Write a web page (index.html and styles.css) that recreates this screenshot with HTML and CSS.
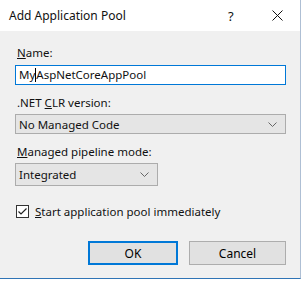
FILE: index.html
```html
<!DOCTYPE html>
<html lang="en">
<head>
    <meta charset="UTF-8">
    <title>Add Application Pool</title>
    <link rel="stylesheet" href="styles.css">
</head>
<body>
    <div class="dialog">
        <div class="titlebar">
            <span class="title">Add Application Pool</span>
            <span class="help">?</span>
            <span class="close">
                <svg width="11" height="11" viewBox="0 0 11 11">
                    <path d="M0.5 0.5 L10.5 10.5 M10.5 0.5 L0.5 10.5" stroke="#111" stroke-width="1" fill="none"/>
                </svg>
            </span>
        </div>

        <div class="content">
            <label class="lbl"><u>N</u>ame:</label>
            <div class="textbox">My<span class="caret"></span>AspNetCoreAppPool</div>

            <label class="lbl lbl-gap">.NET <u>C</u>LR version:</label>
            <div class="combo combo-wide">
                <span>No Managed Code</span>
                <svg class="chev" width="9" height="5" viewBox="0 0 9 5">
                    <path d="M0.5 0.5 L4.5 4.5 L8.5 0.5" stroke="#666" fill="none"/>
                </svg>
            </div>

            <label class="lbl lbl-gap"><u>M</u>anaged pipeline mode:</label>
            <div class="combo combo-small">
                <span>Integrated</span>
                <svg class="chev" width="9" height="5" viewBox="0 0 9 5">
                    <path d="M0.5 0.5 L4.5 4.5 L8.5 0.5" stroke="#666" fill="none"/>
                </svg>
            </div>

            <div class="check-row">
                <span class="checkbox">
                    <svg width="11" height="11" viewBox="0 0 11 11">
                        <path d="M1.5 5.5 L4 8 L9.5 2.5" stroke="#222" stroke-width="1.2" fill="none"/>
                    </svg>
                </span>
                <span><u>S</u>tart application pool immediately</span>
            </div>

            <div class="buttons">
                <button class="btn btn-default">OK</button>
                <button class="btn">Cancel</button>
            </div>
        </div>
    </div>
</body>
</html>
```

FILE: styles.css
```css
body {
    margin: 0;
    background: #ffffff;
    font-family: "Segoe UI", "Noto Sans", "Liberation Sans", sans-serif;
    font-size: 11.5px;
    color: #111111;
}
.dialog {
    width: 300px;
    height: 278px;
    border-right: 1px solid #aebfd4;
    border-bottom: 1px solid #2f74b5;
    display: flex;
    flex-direction: column;
}
.titlebar {
    height: 31px;
    background: #ffffff;
    display: flex;
    align-items: center;
    padding-left: 9px;
    font-size: 12px;
}
.title {
    flex: 1;
}
.help {
    width: 44px;
    font-size: 13px;
}
.close {
    width: 28px;
    display: flex;
    align-items: center;
}
.content {
    flex: 1;
    background: #f0f0f0;
    padding: 14px 14px 0 15px;
    display: flex;
    flex-direction: column;
}
.lbl {
    display: block;
    line-height: 15px;
    padding-left: 2px;
    margin-bottom: 5px;
}
.lbl-gap {
    margin-top: 10px;
    margin-bottom: 4px;
}
.textbox {
    height: 18px;
    line-height: 18px;
    background: #ffffff;
    border: 1px solid #0078d7;
    padding-left: 3px;
    display: flex;
    align-items: center;
}
.caret {
    display: inline-block;
    width: 1px;
    height: 14px;
    background: #000000;
}
.combo {
    height: 18px;
    background: #e5e5e5;
    border: 1px solid #acacac;
    padding: 0 8px 0 3px;
    display: flex;
    align-items: center;
    justify-content: space-between;
}
.combo-small {
    width: 130px;
    height: 21px;
}
.check-row {
    display: flex;
    align-items: center;
    gap: 6px;
    margin-top: 18px;
    padding-left: 1px;
}
.checkbox {
    width: 11px;
    height: 11px;
    border: 1px solid #333333;
    background: #ffffff;
    display: flex;
}
.buttons {
    display: flex;
    justify-content: flex-end;
    gap: 11px;
    margin-top: 22px;
}
.btn {
    font-family: inherit;
    font-size: 12px;
    width: 97px;
    height: 24px;
    background: #e1e1e1;
    border: 1px solid #adadad;
    padding: 0;
    color: #000000;
}
.btn-default {
    width: 90px;
    border: 2px solid #0078d7;
}
```
